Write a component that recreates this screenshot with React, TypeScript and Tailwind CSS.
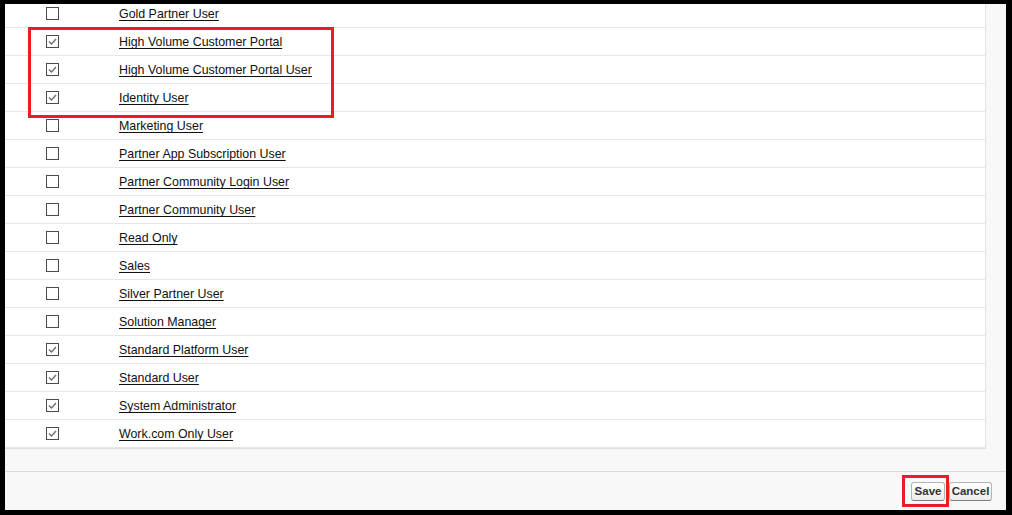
import React from "react";

const rows: [string, boolean][] = [
  ["Gold Partner User", false],
  ["High Volume Customer Portal", true],
  ["High Volume Customer Portal User", true],
  ["Identity User", true],
  ["Marketing User", false],
  ["Partner App Subscription User", false],
  ["Partner Community Login User", false],
  ["Partner Community User", false],
  ["Read Only", false],
  ["Sales", false],
  ["Silver Partner User", false],
  ["Solution Manager", false],
  ["Standard Platform User", true],
  ["Standard User", true],
  ["System Administrator", true],
  ["Work.com Only User", true],
];

function Check({ on }: { on: boolean }) {
  return (
    <svg width="13" height="13" viewBox="0 0 13 13" className="shrink-0">
      <rect x="0.5" y="0.5" width="12" height="12" fill="#fff" stroke="#4a4a4a" />
      {on && (
        <path d="M3 6.5 L5.5 9 L10 4" fill="none" stroke="#6b6b6b" strokeWidth="1.3" />
      )}
    </svg>
  );
}

export default function App() {
  return (
    <div
      className="w-[1012px] h-[515px] bg-black pt-[4px] pl-[5px] pr-[6px] pb-[5px]"
      style={{ fontFamily: '"Liberation Sans", Arial, sans-serif' }}
    >
      <div className="relative w-full h-full bg-[#f8f8f8] flex flex-col overflow-hidden">
        <div className="h-[467px] shrink-0 overflow-hidden">
          <div className="-mt-[4px] w-[981px] bg-white border-r border-[#e2e2e2]">
            {rows.map(([name, on]) => (
              <div
                key={name}
                className="h-[28px] border-b border-[#e6e6e6] flex items-center"
              >
                <div className="ml-[41px]">
                  <Check on={on} />
                </div>
                <a className="ml-[60px] mt-[2px] text-[12.4px] text-[#111] underline decoration-1 underline-offset-[2px] leading-none cursor-pointer">
                  {name}
                </a>
              </div>
            ))}
            <div className="h-px bg-[#dedede]" />
          </div>
        </div>
        <div className="flex-1 border-t border-[#dbdbdb] flex items-start justify-end pt-[10px] pr-[14px] gap-[4px]">
          <button className="h-[19px] w-[34px] border border-[#b5b5b5] border-b-[#7f7f7f] rounded-[3px] bg-gradient-to-b from-white to-[#ededed] text-[11.5px] font-bold text-[#333] leading-none">
            Save
          </button>
          <button className="h-[19px] w-[43px] border border-[#b5b5b5] border-b-[#7f7f7f] rounded-[3px] bg-gradient-to-b from-white to-[#ededed] text-[11.5px] font-bold text-[#333] leading-none">
            Cancel
          </button>
        </div>
        <div className="absolute left-[23px] top-[23px] w-[306px] h-[91px] border-[3px] border-[#ed1c24] pointer-events-none" />
        <div className="absolute left-[897px] top-[471px] w-[47px] h-[32px] border-[3px] border-[#ed1c24] pointer-events-none" />
      </div>
    </div>
  );
}
